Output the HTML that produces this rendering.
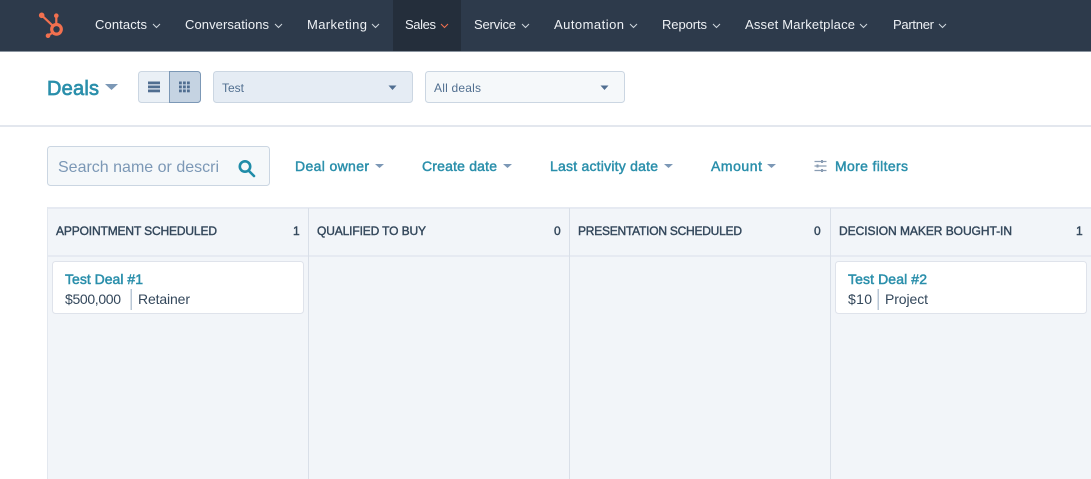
<!DOCTYPE html>
<html><head><meta charset="utf-8"><style>
html,body{margin:0;padding:0;background:#fff;width:1091px;height:479px;overflow:hidden}
svg{display:block;filter:blur(.35px)}
text{font-family:"Liberation Sans",sans-serif;white-space:pre}
.n{font-size:13px;fill:#eef1f5}
.f{font-size:14px;fill:#2a8fab;stroke:#2a8fab;stroke-width:.45}
.h{font-size:12px;fill:#33475b;stroke:#33475b;stroke-width:.4}
.b{font-size:14px;fill:#33475b}
.t{font-size:14px;fill:#2a8fab;stroke:#2a8fab;stroke-width:.5}
</style></head><body>
<svg width="1091" height="479" viewBox="0 0 1091 479" xmlns="http://www.w3.org/2000/svg">
<rect width="1091" height="479" fill="#fff"/>
<!-- nav -->
<rect width="1091" height="51" fill="#2d3a4b"/>
<rect y="51" width="1091" height="1" fill="#8a949f"/>
<rect x="393" width="68" height="51" fill="#242e3b"/>
<g fill="none" stroke="#f2704f">
<circle cx="56.500" cy="29.300" r="4.800" stroke-width="3.200"/>
<path d="M41.700 15.300L52.500 25.500M56.300 15.700V24M48 35.700L52.800 32.500" stroke-width="2.200"/>
</g>
<g fill="#f2704f"><circle cx="41.700" cy="15.300" r="2.800"/><circle cx="56.300" cy="15.700" r="2.300"/><circle cx="48" cy="35.700" r="2.300"/></g>
<text class="n" x="95" y="29" textLength="52">Contacts</text>
<text class="n" x="185" y="29" textLength="84">Conversations</text>
<text class="n" x="307" y="29" textLength="60">Marketing</text>
<text class="n" x="405" y="29" textLength="31">Sales</text>
<text class="n" x="474" y="29" textLength="42">Service</text>
<text class="n" x="554" y="29" textLength="70">Automation</text>
<text class="n" x="662" y="29" textLength="45">Reports</text>
<text class="n" x="745" y="29" textLength="110">Asset Marketplace</text>
<text class="n" x="893" y="29" textLength="41">Partner</text>
<g fill="none" stroke="#cfd6dd" stroke-width="1">
<path d="M153 24l3.500 3.500 3.500-3.500M275 24l3.500 3.500 3.500-3.500M372 24l3.500 3.500 3.500-3.500M522 24l3.500 3.500 3.500-3.500M630 24l3.500 3.500 3.500-3.500M713 24l3.500 3.500 3.500-3.500M860 24l3.500 3.500 3.500-3.500M939 24l3.500 3.500 3.500-3.500"/>
<path d="M441 24l3.500 3.500 3.500-3.500" stroke="#f2704f"/>
</g>
<!-- title row -->
<text x="47" y="95" font-size="20" fill="#2a8fab" stroke="#2a8fab" stroke-width=".7" textLength="52">Deals</text>
<path d="M105 84h13l-6.500 6z" fill="#7c98b6"/>
<rect x="138.500" y="71.500" width="62" height="31" rx="3" fill="#eaf0f6" stroke="#cbd6e2"/>
<path d="M169.500 71.500h28a3 3 0 0 1 3 3v25a3 3 0 0 1-3 3h-28z" fill="#c5d3e2" stroke="#7c98b6"/>
<g fill="#506e91">
<rect x="148" y="81.500" width="12" height="2.800"/><rect x="148" y="85.500" width="12" height="2.800"/><rect x="148" y="89.500" width="12" height="2.800"/>
<rect x="179" y="81.500" width="2.800" height="2.800"/><rect x="183" y="81.500" width="2.800" height="2.800"/><rect x="187" y="81.500" width="2.800" height="2.800"/>
<rect x="179" y="85.500" width="2.800" height="2.800"/><rect x="183" y="85.500" width="2.800" height="2.800"/><rect x="187" y="85.500" width="2.800" height="2.800"/>
<rect x="179" y="89.500" width="2.800" height="2.800"/><rect x="183" y="89.500" width="2.800" height="2.800"/><rect x="187" y="89.500" width="2.800" height="2.800"/>
</g>
<rect x="213.500" y="71.500" width="199" height="31" rx="3" fill="#e5ecf4" stroke="#cbd6e2"/>
<rect x="425.500" y="71.500" width="199" height="31" rx="3" fill="#f5f8fa" stroke="#cbd6e2"/>
<text x="222" y="92" font-size="12" fill="#516f90" textLength="22">Test</text>
<text x="434" y="92" font-size="12" fill="#516f90" textLength="47">All deals</text>
<path d="M388.500 85.500h8l-4 4.500zM600.500 85.500h8l-4 4.500z" fill="#506e91"/>
<rect y="125" width="1091" height="2" fill="#e3e7ee"/>
<!-- filters -->
<rect x="47.500" y="146.500" width="222" height="39" rx="3" fill="#f5f8fa" stroke="#cbd6e2"/>
<text x="58" y="172" font-size="16" fill="#7c98b6" textLength="161">Search name or descri</text>
<g fill="none" stroke="#1f8ca8" stroke-width="2.600"><circle cx="245" cy="166.500" r="5.200"/><path d="M249 171l5 5" stroke-linecap="round"/></g>
<text class="f" x="295" y="171" textLength="74">Deal owner</text>
<text class="f" x="422" y="171" textLength="75">Create date</text>
<text class="f" x="550" y="171" textLength="108">Last activity date</text>
<text class="f" x="711" y="171" textLength="51">Amount</text>
<text class="f" x="835" y="171" textLength="73">More filters</text>
<path d="M375 164h9l-4.500 4zM503 164h9l-4.500 4zM664 164h9l-4.500 4zM767 164h9l-4.500 4z" fill="#7c98b6"/>
<g stroke="#8a9db3" stroke-width="1.300" fill="none">
<path d="M814.500 161.500h12M814.500 166h12M814.500 170.500h12"/>
<path d="M822 160v3M817.500 164.500v3M822 169v3" stroke-width="2"/>
</g>
<!-- board -->
<rect x="47" y="207" width="1044" height="272" fill="#f2f5f9"/>
<rect x="47" y="207" width="1044" height="2" fill="#e6eaf2"/>
<rect x="47" y="255" width="1044" height="2" fill="#e6eaf2"/>
<rect x="47" y="207" width="1" height="272" fill="#e3e8ef"/>
<g fill="#d9dfe8">
<rect x="308" y="208" width="1" height="271"/>
<rect x="569" y="208" width="1" height="271"/>
<rect x="830" y="208" width="1" height="271"/>
</g>
<text class="h" x="56" y="235" textLength="161">APPOINTMENT SCHEDULED</text>
<text class="h" x="293" y="235">1</text>
<text class="h" x="317" y="235" textLength="109">QUALIFIED TO BUY</text>
<text class="h" x="554" y="235">0</text>
<text class="h" x="578" y="235" textLength="164">PRESENTATION SCHEDULED</text>
<text class="h" x="814" y="235">0</text>
<text class="h" x="839" y="235" textLength="173">DECISION MAKER BOUGHT-IN</text>
<text class="h" x="1076" y="235">1</text>
<!-- cards -->
<rect x="52.500" y="261.500" width="251" height="52" rx="3" fill="#fff" stroke="#dfe3eb"/>
<rect x="835.500" y="261.500" width="251" height="52" rx="3" fill="#fff" stroke="#dfe3eb"/>
<text class="t" x="65" y="284" textLength="78">Test Deal #1</text>
<text class="b" x="65" y="304" textLength="56">$500,000</text>
<rect x="130.500" y="289" width="1.500" height="21" fill="#b9c7d6"/>
<text class="b" x="138" y="304" textLength="52">Retainer</text>
<text class="t" x="848" y="284" textLength="79">Test Deal #2</text>
<text class="b" x="848" y="304" textLength="24">$10</text>
<rect x="877.500" y="289" width="1.500" height="21" fill="#b9c7d6"/>
<text class="b" x="885" y="304" textLength="43">Project</text>
</svg>
</body></html>
